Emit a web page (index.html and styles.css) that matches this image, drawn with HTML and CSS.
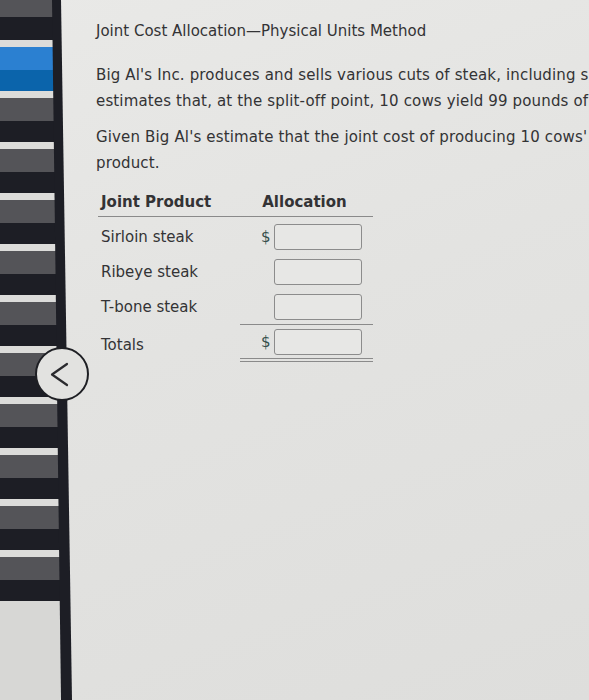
FILE: index.html
```html
<!DOCTYPE html>
<html>
<head>
<meta charset="utf-8">
<link rel="stylesheet" href="styles.css">
</head>
<body>
<div class="page">
  <aside class="sidebar">
    <div class="stripes">
      <div class="item partial"><div class="gray top"></div><div class="dark"></div></div>
      <div class="item selected"><div class="light"></div><div class="blue1"></div><div class="blue2"></div></div>
      <div class="item"><div class="light"></div><div class="gray"></div><div class="dark"></div></div>
      <div class="item"><div class="light"></div><div class="gray"></div><div class="dark"></div></div>
      <div class="item"><div class="light"></div><div class="gray"></div><div class="dark"></div></div>
      <div class="item"><div class="light"></div><div class="gray"></div><div class="dark"></div></div>
      <div class="item"><div class="light"></div><div class="gray"></div><div class="dark"></div></div>
      <div class="item"><div class="light"></div><div class="gray"></div><div class="dark"></div></div>
      <div class="item"><div class="light"></div><div class="gray"></div><div class="dark"></div></div>
      <div class="item"><div class="light"></div><div class="gray"></div><div class="dark"></div></div>
      <div class="item"><div class="light"></div><div class="gray"></div><div class="dark"></div></div>
      <div class="item"><div class="light"></div><div class="gray"></div><div class="dark"></div></div>
      <div class="rest"></div>
    </div>
  </aside>
  <button class="back" aria-label="Back">
    <svg width="24" height="26" viewBox="0 0 24 26"><path d="M19 3 L4 13.5 L19 24" fill="none" stroke="#2a2a2e" stroke-width="2.2" stroke-linecap="round" stroke-linejoin="round"/></svg>
  </button>
  <main class="content">
    <h1 class="title">Joint Cost Allocation—Physical Units Method</h1>
    <p class="para">
      <span class="line">Big Al's Inc. produces and sells various cuts of steak, including sirloin</span>
      <span class="line">estimates that, at the split-off point, 10 cows yield 99 pounds of</span>
    </p>
    <p class="para second">
      <span class="line">Given Big Al's estimate that the joint cost of producing 10 cows' worth</span>
      <span class="line">product.</span>
    </p>
    <div class="table">
      <div class="row head">
        <div class="lab">Joint Product</div>
        <div class="alloc">Allocation</div>
      </div>
      <div class="row">
        <div class="lab">Sirloin steak</div>
        <div class="cell"><span class="dollar">$</span><span class="input"></span></div>
      </div>
      <div class="row">
        <div class="lab">Ribeye steak</div>
        <div class="cell"><span class="dollar"></span><span class="input"></span></div>
      </div>
      <div class="row">
        <div class="lab">T-bone steak</div>
        <div class="cell"><span class="dollar"></span><span class="input"></span></div>
      </div>
      <div class="row total">
        <div class="lab">Totals</div>
        <div class="cell"><span class="dollar">$</span><span class="input"></span></div>
      </div>
    </div>
  </main>
</div>
</body>
</html>
```
FILE: styles.css
```css
html, body {
  margin: 0;
  padding: 0;
}
body {
  width: 589px;
  height: 700px;
  overflow: hidden;
  background: #e3e3e1;
  font-family: "DejaVu Sans", Verdana, sans-serif;
  color: #333335;
}
.page {
  position: relative;
  display: flex;
  height: 700px;
  background: linear-gradient(160deg, #e9e9e7 0%, #e3e3e1 45%, #dededc 100%);
}
.sidebar {
  width: 72px;
  flex: none;
  height: 700px;
  background: #1d1e25;
  clip-path: polygon(0 0, 61px 0, 72px 100%, 0 100%);
}
.stripes {
  width: 62px;
  height: 700px;
  display: flex;
  flex-direction: column;
  clip-path: polygon(0 0, 52px 0, 61px 100%, 0 100%);
}
.item { display: flex; flex-direction: column; flex: none; }
.light { height: 7px; background: #dcdcda; }
.gray { height: 23px; background: #545458; }
.gray.top { height: 17px; }
.dark { height: 21px; background: #1d1e25; }
.partial .dark { height: 23px; }
.blue1 { height: 23px; background: #2b80d1; }
.blue2 { height: 21px; background: #0b64ab; }
.rest { flex: 1; background: #d7d7d5; }
.back {
  position: absolute;
  left: 35px;
  top: 347px;
  width: 54px;
  height: 54px;
  border-radius: 50%;
  border: 2.5px solid #1e1f24;
  background: #e2e2e0;
  padding: 0;
  display: flex;
  align-items: center;
  justify-content: center;
  box-sizing: border-box;
}
.back svg { margin-left: -4px; }
.content {
  flex: 1;
  min-width: 0;
  padding-left: 24px;
  padding-top: 20px;
  overflow: hidden;
}
.title {
  margin: 0;
  font-size: 15px;
  font-weight: normal;
  line-height: 22px;
  white-space: nowrap;
}
.para {
  margin: 20px 0 0 0;
  font-size: 15px;
  line-height: 26px;
  letter-spacing: 0.15px;
}
.para.second { margin-top: 10px; }
.para .line {
  display: block;
  white-space: nowrap;
}
.table {
  margin-top: 17px;
  margin-left: 2px;
  width: 275px;
  font-size: 15px;
}
.row {
  display: grid;
  grid-template-columns: 142px 133px;
  align-items: center;
  height: 35px;
}
.row .lab { padding-left: 3px; }
.row.head {
  height: 23px;
  border-bottom: 1.5px solid #8a8a8a;
  font-weight: bold;
  align-items: start;
}
.row.head .alloc { text-align: center; padding-right: 4px; }
.row.head + .row { margin-top: 2px; }
.cell {
  display: flex;
  align-items: center;
}
.dollar {
  width: 13px;
  margin-left: 21px;
  color: #34504c;
  font-size: 15px;
  text-align: left;
}
.input {
  width: 88px;
  height: 26px;
  box-sizing: border-box;
  border: 1.5px solid #8c8c8c;
  border-radius: 3px;
  background: #e7e7e5;
}
.row.total {
  height: 38px;
}
.row.total .lab { padding-top: 4px; }
.row.total .cell {
  border-top: 1.5px solid #8a8a8a;
  border-bottom: 4px double #8a8a8a;
  height: 38px;
  box-sizing: border-box;
}
```
